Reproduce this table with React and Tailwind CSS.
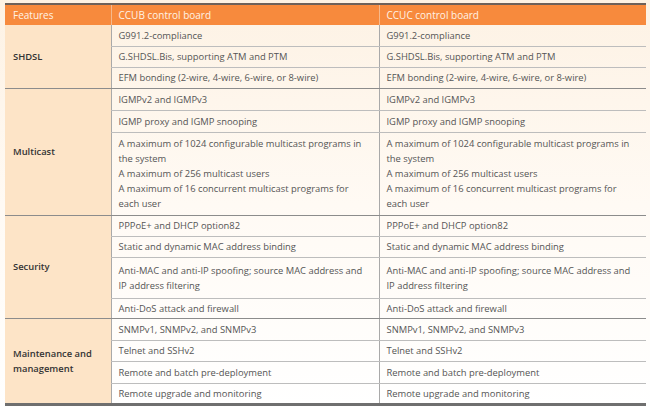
import React from 'react';

const same = (lines, h) => ({ h, a: lines, b: lines });

const sections = [
  {
    name: ['SHDSL'],
    rows: [
      same(['G991.2-compliance'], 'h-[21px]'),
      same(['G.SHDSL.Bis, supporting ATM and PTM'], 'h-[21px]'),
      same(['EFM bonding (2-wire, 4-wire, 6-wire, or 8-wire)'], 'h-[21px]'),
    ],
  },
  {
    name: ['Multicast'],
    rows: [
      same(['IGMPv2 and IGMPv3'], 'h-[22px]'),
      same(['IGMP proxy and IGMP snooping'], 'h-[22px]'),
      same(
        [
          'A maximum of 1024 configurable multicast programs in',
          'the system',
          'A maximum of 256 multicast users',
          'A maximum of 16 concurrent multicast programs for',
          'each user',
        ],
        'h-[83px]'
      ),
    ],
  },
  {
    name: ['Security'],
    rows: [
      same(['PPPoE+ and DHCP option82'], 'h-[21px]'),
      same(['Static and dynamic MAC address binding'], 'h-[21px]'),
      same(['Anti-MAC and anti-IP spoofing; source MAC address and', 'IP address filtering'], 'h-[41px]'),
      same(['Anti-DoS attack and firewall'], 'h-[20px]'),
    ],
  },
  {
    name: ['Maintenance and', 'management'],
    rows: [
      same(['SNMPv1, SNMPv2, and SNMPv3'], 'h-[22px]'),
      same(['Telnet and SSHv2'], 'h-[21px]'),
      same(['Remote and batch pre-deployment'], 'h-[22px]'),
      same(['Remote upgrade and monitoring'], 'h-[21px]'),
    ],
  },
];

function Cell({ lines, h, last }) {
  return (
    <td className={`${h} px-[7px] py-0 align-middle border-l border-[#a9a9a9] ${last ? 'border-b border-b-[#8c8c8c]' : 'border-b border-b-[#bdbdbd]'}`}>
      {lines.map((l, i) => (
        <div key={i} className="leading-[15px] whitespace-nowrap">{l}</div>
      ))}
    </td>
  );
}

export default function App() {
  return (
    <div className="w-[650px] h-[408px] bg-gradient-to-b from-[#fdf2e4] via-[#fffaf4] to-white pt-[3px] px-[5px] font-['Open_Sans','Liberation_Sans',sans-serif] text-[9.4px] text-[#555]">
      <table className="w-[641px] border-collapse table-fixed border-t-[2px] border-t-[#6e615a] border-b-[3px] border-b-[#6f6f6f]">
        <colgroup>
          <col className="w-[106px]" />
          <col className="w-[268px]" />
          <col />
        </colgroup>
        <thead>
          <tr className="h-[21px] bg-[#f78a3d] text-[#fff3e6] text-[10px]">
            <th className="text-left font-normal px-[8px]">Features</th>
            <th className="text-left font-normal px-[7px] border-l border-[#f6b98c]">CCUB control board</th>
            <th className="text-left font-normal px-[7px] border-l border-[#f6b98c]">CCUC control board</th>
          </tr>
        </thead>
        <tbody>
          {sections.map((s) =>
            s.rows.map((r, i) => (
              <tr key={s.name[0] + i}>
                {i === 0 && (
                  <td
                    rowSpan={s.rows.length}
                    className="bg-[#fde4c7] px-[8px] align-middle font-semibold text-[#333] leading-[15px] border-b border-b-[#8c8c8c]"
                  >
                    {s.name.map((n) => (
                      <div key={n}>{n}</div>
                    ))}
                  </td>
                )}
                <Cell lines={r.a} h={r.h} last={i === s.rows.length - 1} />
                <Cell lines={r.b} h={r.h} last={i === s.rows.length - 1} />
              </tr>
            ))
          )}
        </tbody>
      </table>
    </div>
  );
}
